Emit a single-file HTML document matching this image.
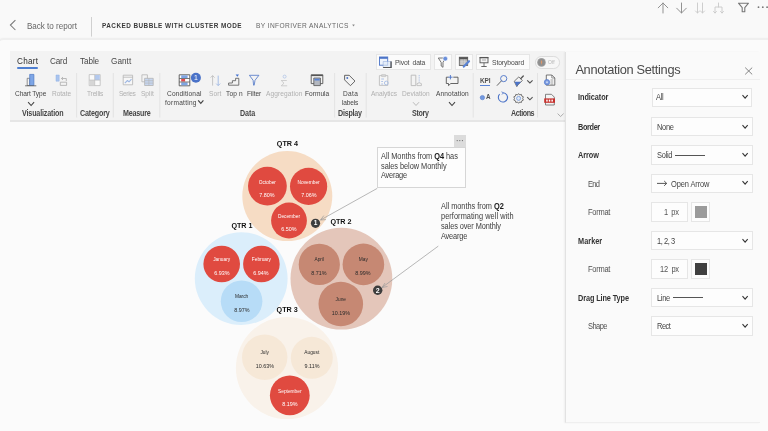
<!DOCTYPE html><html><head><meta charset="utf-8"><style>html,body{margin:0;padding:0;width:768px;height:431px;overflow:hidden;font-family:"Liberation Sans", sans-serif;-webkit-font-smoothing:antialiased}</style></head><body><div style="position:relative;width:768px;height:431px;overflow:hidden;will-change:transform"><div style="position:absolute;left:0;top:0;width:768px;height:431px;background:#f9f9f9"></div><div style="position:absolute;left:-2px;top:38.6px;width:790px;height:420px;background:#fbfbfb;border:1px solid #efefef;border-radius:5px;box-shadow:0 -0.5px 1.5px rgba(0,0,0,0.05)"></div><svg style="position:absolute;left:0;top:0" width="768" height="45"><polyline points="15.4,20.2 10.4,25.1 15.4,30" fill="none" stroke="#777" stroke-width="1.05"/><line x1="91.5" y1="17" x2="91.5" y2="36.6" stroke="#d0d0d0" stroke-width="1"/></svg><svg style="position:absolute;left:351px;top:23px" width="5" height="5"><polygon points="1.2,1.6 3.8,1.6 2.5,3.4" fill="#888"/></svg><svg style="position:absolute;left:650px;top:0" width="118" height="18" fill="none" stroke-linecap="round" stroke-linejoin="round">
<g stroke="#8c8c8c" stroke-width="0.95"><line x1="13" y1="3" x2="13" y2="13"/><polyline points="8.2,7.8 13,3 17.8,7.8"/></g>
<g stroke="#8c8c8c" stroke-width="0.95"><line x1="31.5" y1="3" x2="31.5" y2="13"/><polyline points="26.7,8.2 31.5,13 36.3,8.2"/></g>
<g stroke="#c8c8c8" stroke-width="0.9"><line x1="47.5" y1="3" x2="47.5" y2="13"/><polyline points="45.5,11 47.5,13 49.5,11"/><line x1="52.5" y1="3" x2="52.5" y2="13"/><polyline points="50.5,11 52.5,13 54.5,11"/></g>
<g stroke="#c8c8c8" stroke-width="0.9"><line x1="68.5" y1="3" x2="68.5" y2="7"/><polyline points="65,13 65,7 72,7 72,13"/><polyline points="63.5,11.5 65,13 66.5,11.5"/><polyline points="70.5,11.5 72,13 73.5,11.5"/></g>
<g stroke="#777" stroke-width="1.1"><polygon points="88.5,3.2 98.5,3.2 94.8,7.6 94.8,11.8 92.2,11.8 92.2,7.6"/></g>
<g fill="#777" stroke="none"><circle cx="108.5" cy="7.2" r="0.9"/><circle cx="112.8" cy="7.2" r="0.9"/><circle cx="117.1" cy="7.2" r="0.9"/></g>
</svg><div style="position:absolute;left:10.2px;top:51.1px;width:554.4px;height:68.8px;background:#f3f3f3;border-bottom:2px solid #e6e6e6"></div><div style="position:absolute;left:17px;top:67.2px;width:21px;height:1.6px;background:#4f7fd1;border-radius:1px"></div><svg style="position:absolute;left:0;top:0" width="768" height="125"><line x1="76.6" y1="73" x2="76.6" y2="117.5" stroke="#dedede" stroke-width="0.8"/><line x1="113.3" y1="73" x2="113.3" y2="117.5" stroke="#dedede" stroke-width="0.8"/><line x1="159.8" y1="73" x2="159.8" y2="117.5" stroke="#dedede" stroke-width="0.8"/><line x1="334.6" y1="73" x2="334.6" y2="117.5" stroke="#dedede" stroke-width="0.8"/><line x1="366.2" y1="73" x2="366.2" y2="117.5" stroke="#dedede" stroke-width="0.8"/><line x1="473.2" y1="73" x2="473.2" y2="117.5" stroke="#dedede" stroke-width="0.8"/><line x1="537.5" y1="73" x2="537.5" y2="117.5" stroke="#dedede" stroke-width="0.8"/></svg><svg style="position:absolute;left:0;top:0" width="768" height="125"><polyline points="28.1,102.2 31.1,105.5 34.1,102.2" fill="none" stroke="#444" stroke-width="1.1"/><polyline points="198.20000000000002,100.4 200.8,103.3 203.4,100.4" fill="none" stroke="#444" stroke-width="1.2"/><polyline points="413.0,102.2 416,105.5 419.0,102.2" fill="none" stroke="#bbb" stroke-width="1.0"/><polyline points="449.0,102.2 452,105.5 455.0,102.2" fill="none" stroke="#444" stroke-width="1.1"/><polyline points="527.1999999999999,80.3 529.9,83.0 532.6,80.3" fill="none" stroke="#555" stroke-width="1.1"/><polyline points="527.1999999999999,97.1 529.9,99.8 532.6,97.1" fill="none" stroke="#555" stroke-width="1.1"/><polyline points="557.6,113.60000000000001 560.6,116.5 563.6,113.60000000000001" fill="none" stroke="#999" stroke-width="0.8"/></svg><svg style="position:absolute;left:0;top:0" width="768" height="125" fill="none" stroke-linejoin="round">
<!-- chart type -->
<rect x="27.2" y="78.3" width="2.5" height="7.2" stroke="#666" stroke-width="0.7"/>
<rect x="29.7" y="74.4" width="4.2" height="11.1" fill="#7ea6e6" stroke="#4d78c4" stroke-width="0.7"/>
<line x1="25.1" y1="85.8" x2="36.3" y2="85.8" stroke="#555" stroke-width="0.8"/>
<!-- rotate -->
<rect x="56" y="75" width="3.2" height="6.2" fill="#a9c4ee" stroke="#8fb0e6" stroke-width="0.5"/>
<path d="M61.6,78.5 L66.3,78.5 L66.3,81" stroke="#aaa" stroke-width="0.8"/><polyline points="63,77 61.4,78.5 63,80" stroke="#aaa" stroke-width="0.8"/>
<rect x="60.3" y="82.2" width="6.3" height="3.2" stroke="#aaa" stroke-width="0.8"/>
<!-- trellis -->
<rect x="89.2" y="74.6" width="11" height="11" fill="#fafafa" stroke="#bdbdbd" stroke-width="0.8"/>
<rect x="94.7" y="75" width="5.1" height="5.1" fill="#b3c9ee"/>
<rect x="89.6" y="80.1" width="5.1" height="5.1" fill="#d6d6d6"/>
<line x1="94.7" y1="74.6" x2="94.7" y2="85.6" stroke="#bdbdbd" stroke-width="0.7"/><line x1="89.2" y1="80.1" x2="100.2" y2="80.1" stroke="#bdbdbd" stroke-width="0.7"/>
<!-- series -->
<rect x="123.2" y="75.2" width="9.4" height="9.6" fill="#f7f7f7" stroke="#b4b4b4" stroke-width="0.8"/>
<line x1="123.2" y1="77.2" x2="132.6" y2="77.2" stroke="#b4b4b4" stroke-width="0.8"/>
<path d="M124.8,83.2 L127.5,80.5 L129,81.8 L131.5,79.2" stroke="#9fb8e3" stroke-width="1.1"/>
<!-- split -->
<rect x="141.9" y="74.8" width="5.5" height="7" stroke="#b4b4b4" stroke-width="0.8"/>
<rect x="144.6" y="78.3" width="8.6" height="7.2" fill="#c6d6f0" stroke="#b4b4b4" stroke-width="0.8"/>
<line x1="144.6" y1="80.7" x2="153.2" y2="80.7" stroke="#b4b4b4" stroke-width="0.6"/><line x1="144.6" y1="83.1" x2="153.2" y2="83.1" stroke="#b4b4b4" stroke-width="0.6"/><line x1="148.9" y1="78.3" x2="148.9" y2="85.5" stroke="#b4b4b4" stroke-width="0.6"/>
<!-- conditional formatting -->
<rect x="179.2" y="74.8" width="10.6" height="11" fill="#fff" stroke="#555" stroke-width="0.9"/>
<rect x="181.2" y="75.3" width="6.4" height="2.8" fill="#7fa5e3"/>
<rect x="181.2" y="82.4" width="6.4" height="2.9" fill="#7fa5e3"/>
<rect x="181.2" y="79" width="3.9" height="2.5" fill="#e5484d"/>
<line x1="179.2" y1="78.5" x2="189.8" y2="78.5" stroke="#555" stroke-width="0.8"/>
<line x1="179.2" y1="82" x2="189.8" y2="82" stroke="#555" stroke-width="0.8"/>
<circle cx="195.9" cy="77.7" r="5" fill="#4a72c8"/>
<!-- sort -->
<g stroke="#c0c0c0" stroke-width="0.9"><line x1="212.6" y1="75.6" x2="212.6" y2="85.6"/><polyline points="210.6,77.6 212.6,75.6 214.6,77.6"/></g>
<g stroke="#9fb8e3" stroke-width="0.9"><line x1="218.2" y1="75.6" x2="218.2" y2="85.6"/><polyline points="216.2,83.6 218.2,85.6 220.2,83.6"/></g>
<!-- top n -->
<path d="M228.6,85.2 L238.8,85.2 L238.8,78.3 L235.6,78.3 L235.6,80.7 L232.4,80.7 L232.4,83 L228.6,83 Z" stroke="#555" stroke-width="0.8"/>
<polygon points="235.6,74.6 239,74.6 237.3,76.7" fill="#3f6fd0"/>
<!-- filter -->
<polygon points="249.4,75.3 258.9,75.3 255,80.3 254.2,85.2 253.6,85.2 253.1,80.3" stroke="#4b73c7" stroke-width="0.8"/>
<!-- aggregation -->
<path d="M286.8,80.5 L281.2,80.5 L284,83.2 L281.2,85.8 L287.2,85.8" stroke="#c4c4c4" stroke-width="0.8"/>
<circle cx="284.6" cy="76.6" r="1.5" stroke="#a9c0e6" stroke-width="0.7"/>
<!-- formula -->
<rect x="311.2" y="74.8" width="11.6" height="8.8" fill="#f3f3f3" stroke="#555" stroke-width="0.9"/>
<rect x="311.2" y="74.8" width="11.6" height="1.3" fill="#555"/>
<rect x="313.8" y="78" width="6.6" height="7.6" fill="#b4b8c0" stroke="#555" stroke-width="0.8"/>
<rect x="314.5" y="78.7" width="5.2" height="1.8" fill="#5a84d6"/>
<!-- data labels (tag) -->
<path d="M344.6,75.3 L349.2,75.3 L355,81.1 L350.4,85.7 L344.6,79.9 Z" stroke="#555" stroke-width="0.9"/>
<circle cx="347.3" cy="78" r="0.95" fill="#4b73c7"/>
<!-- analytics -->
<rect x="379.4" y="75.6" width="8.4" height="9.8" fill="#f6f6f6" stroke="#b8b8b8" stroke-width="0.8"/>
<rect x="381.6" y="74.6" width="4" height="2" fill="#d8d8d8" stroke="#b8b8b8" stroke-width="0.5"/>
<line x1="381.2" y1="79" x2="384" y2="79" stroke="#9fb8e3" stroke-width="0.8"/><line x1="381.2" y1="81.5" x2="383" y2="81.5" stroke="#9fb8e3" stroke-width="0.8"/><line x1="381.2" y1="84" x2="383" y2="84" stroke="#9fb8e3" stroke-width="0.8"/>
<circle cx="386.3" cy="83" r="1.9" stroke="#9fb8e3" stroke-width="0.8"/>
<!-- deviation -->
<rect x="411.2" y="75.2" width="4.6" height="10.4" stroke="#b8b8b8" stroke-width="0.9"/>
<line x1="419.2" y1="75" x2="419.2" y2="82.5" stroke="#9fb8e3" stroke-width="0.8" stroke-dasharray="1.3,0.9"/>
<path d="M417,85.6 L417,83.6 Q419.2,82 421.4,83.6 L421.4,85.6 Z" stroke="#b8b8b8" stroke-width="0.8"/>
<!-- annotation -->
<path d="M448.5,77.2 L446.3,77.2 L446.3,83.5 L448.5,83.5 L448.5,85.6 L450.8,83.5 L458,83.5 L458,77.2 L453.3,77.2" stroke="#555" stroke-width="0.9"/>
<g stroke="#4b73c7" stroke-width="0.9"><line x1="450.4" y1="75" x2="450.4" y2="79.4"/><line x1="448.2" y1="77.2" x2="452.6" y2="77.2"/></g>
<!-- search -->
<circle cx="503.7" cy="78.6" r="3.1" stroke="#4b73c7" stroke-width="0.9"/>
<line x1="501.4" y1="80.9" x2="497.2" y2="85.4" stroke="#555" stroke-width="0.9" stroke-linecap="round"/>
<!-- brush -->
<path d="M514.2,81.3 L518.8,76.9 L522.4,80.5 L517.8,85 L516.8,86.6 Z" fill="#f3f3f3" stroke="#555" stroke-width="0.8"/>
<path d="M514.6,81.8 L521.2,81.7 L517.8,85 L516.8,86.4 Z" fill="#4b73c7"/>
<line x1="520.8" y1="78.5" x2="523.3" y2="76" stroke="#555" stroke-width="1.3" stroke-linecap="round"/>
<!-- refresh -->
<path d="M499.6,94.2 A4.6,4.6 0 1 0 503.2,92.8" stroke="#4b73c7" stroke-width="1.1"/>
<polyline points="501.5,91.8 503.4,92.8 502,94.5" stroke="#4b73c7" stroke-width="0.8"/>
<!-- gear -->
<circle cx="518.6" cy="98.4" r="2" fill="#dfe8f7" stroke="#6f95dc" stroke-width="0.8"/>
<path d="M518.6,93.6 L519.7,94.9 L521.4,94.4 L521.8,96.1 L523.4,96.8 L522.7,98.4 L523.4,100.1 L521.8,100.8 L521.4,102.5 L519.7,102 L518.6,103.3 L517.5,102 L515.8,102.5 L515.4,100.8 L513.8,100.1 L514.5,98.4 L513.8,96.8 L515.4,96.1 L515.8,94.4 L517.5,94.9 Z" stroke="#555" stroke-width="0.8"/>
<!-- doc -->
<path d="M546.3,75 L551.8,75 L554.8,78 L554.8,85.2 L546.3,85.2 Z" fill="#fafafa" stroke="#555" stroke-width="0.8"/>
<path d="M551.8,75 L551.8,78 L554.8,78" stroke="#555" stroke-width="0.6"/>
<line x1="550.5" y1="80" x2="553.3" y2="80" stroke="#666" stroke-width="0.6"/><line x1="550.5" y1="82" x2="553.3" y2="82" stroke="#666" stroke-width="0.6"/><line x1="550.5" y1="84" x2="553.3" y2="84" stroke="#666" stroke-width="0.6"/>
<circle cx="547" cy="82.2" r="2.7" fill="#7b9be0" stroke="#4b73c7" stroke-width="0.6"/>
<circle cx="547" cy="82.2" r="1" fill="#c9d7f3"/>
<!-- pdf -->
<path d="M545.5,94.3 L551.5,94.3 L554.3,97.1 L554.3,105 L545.5,105 Z" fill="#f4f4f4" stroke="#666" stroke-width="0.8"/>
<rect x="544.2" y="98.4" width="10.8" height="4.4" fill="#c62f2b"/>
<g fill="#fff"><rect x="546.2" y="99.6" width="1.5" height="2"/><rect x="548.8" y="99.6" width="1.5" height="2"/><rect x="551.4" y="99.6" width="1.5" height="2"/></g>
</svg><div style="position:absolute;left:479.8px;top:85px;width:10.5px;height:0.9px;background:#5a84d6"></div><svg style="position:absolute;left:0;top:0" width="768" height="125"><circle cx="482.4" cy="97.6" r="2.2" fill="#7299df" stroke="#4b73c7" stroke-width="0.5"/></svg><div style="position:absolute;left:375.6px;top:53.8px;width:55.599999999999966px;height:16.700000000000003px;background:#fbfbfb;border:0.8px solid #e6e6e6;box-sizing:border-box"></div><div style="position:absolute;left:433.6px;top:53.8px;width:18.799999999999955px;height:16.700000000000003px;background:#fbfbfb;border:0.8px solid #e6e6e6;box-sizing:border-box"></div><div style="position:absolute;left:454.9px;top:53.8px;width:18.400000000000034px;height:16.700000000000003px;background:#fbfbfb;border:0.8px solid #e6e6e6;box-sizing:border-box"></div><div style="position:absolute;left:476.2px;top:53.8px;width:54.19999999999999px;height:16.700000000000003px;background:#fbfbfb;border:0.8px solid #e6e6e6;box-sizing:border-box"></div><div style="position:absolute;left:535.4px;top:56.2px;width:24.2px;height:12.4px;border:0.8px solid #dcdcdc;border-radius:6.2px;box-sizing:border-box;background:#f7f7f7"></div><svg style="position:absolute;left:0;top:0" width="768" height="125" fill="none">
<circle cx="541.5" cy="62.4" r="4.3" fill="#a0a0a0"/><circle cx="541.5" cy="62.4" r="3.4" fill="#8f8f8f"/><path d="M541.5,59.8 Q543.2,62.5 541.5,65 Q539.8,62.5 541.5,59.8 Z" fill="#e0986a"/>
<!-- pivot icon -->
<rect x="379.5" y="57" width="8.2" height="8.2" fill="#eef3fb" stroke="#4b73c7" stroke-width="0.9"/>
<rect x="379.5" y="57" width="8.2" height="1.8" fill="#4b73c7"/>
<path d="M383.2,67.5 L391,67.5 L391,61.5" stroke="#555" stroke-width="1.1"/>
<path d="M383.2,61.5 L391,61.5 L391,67.5 L383.2,67.5 Z" fill="#dfe9f7" fill-opacity="0.7" stroke="#8aa5d8" stroke-width="0.5"/>
<path d="M383.2,67.5 L391,67.5 L391,61.5" stroke="#555" stroke-width="1.1"/>
<!-- filter btn icon -->
<polygon points="438.3,58 445.5,58 443,62.5 443,67.3 441.2,66 441.2,62.5" fill="#f6f6f6" stroke="#666" stroke-width="0.9"/>
<circle cx="445.3" cy="58.7" r="2.4" fill="#6a8fdb" stroke="#fff" stroke-width="0.6"/>
<!-- table edit icon -->
<rect x="459.3" y="57.2" width="8.4" height="8.2" fill="#b5b5b5" stroke="#555" stroke-width="0.8"/>
<rect x="459.3" y="57.2" width="8.4" height="2" fill="#555"/>
<g stroke="#e9e9e9" stroke-width="0.5"><line x1="459.7" y1="61.9" x2="467.3" y2="61.9"/><line x1="459.7" y1="63.9" x2="467.3" y2="63.9"/><line x1="462" y1="59.3" x2="462" y2="65.2"/><line x1="464.8" y1="59.3" x2="464.8" y2="65.2"/></g>
<line x1="463.8" y1="66.6" x2="469" y2="61.2" stroke="#5a84d6" stroke-width="2.2" stroke-linecap="round"/>
<!-- storyboard icon -->
<rect x="480" y="57.6" width="8" height="5.2" fill="#f3f3f3" stroke="#555" stroke-width="0.9"/>
<line x1="479.6" y1="57.6" x2="488.4" y2="57.6" stroke="#555" stroke-width="1.3"/>
<line x1="482" y1="60" x2="486" y2="60" stroke="#888" stroke-width="0.7"/>
<line x1="484" y1="62.8" x2="484" y2="66.3" stroke="#555" stroke-width="0.8"/><line x1="481.3" y1="66.5" x2="486.7" y2="66.5" stroke="#555" stroke-width="0.9"/>
</svg><div style="position:absolute;left:565px;top:52px;width:195px;height:370.6px;background:#fafafa;border-left:1px solid #e2e2e2;border-bottom:1px solid #efefef;box-sizing:border-box;box-shadow:-1px 0 1.5px rgba(0,0,0,0.05)"></div><div style="position:absolute;left:566px;top:79.2px;width:194px;height:0.8px;background:#efefef"></div><svg style="position:absolute;left:740px;top:62px" width="18" height="18"><g stroke="#777" stroke-width="0.9"><line x1="5.2" y1="5.6" x2="12.2" y2="12.4"/><line x1="12.2" y1="5.6" x2="5.2" y2="12.4"/></g></svg><div style="position:absolute;left:652.3px;top:87.5px;width:99.5px;height:19.4px;background:#fdfdfd;border:0.8px solid #e6e6e6;box-sizing:border-box"></div><svg style="position:absolute;left:738px;top:91.1px" width="14" height="12"><polyline points="4.5,4.199999999999999 7.1,7.1000000000000005 9.7,4.199999999999999" fill="none" stroke="#333" stroke-width="1.1"/></svg><div style="position:absolute;left:651px;top:117.0px;width:101.8px;height:19.4px;background:#fdfdfd;border:0.8px solid #e6e6e6;box-sizing:border-box"></div><svg style="position:absolute;left:738px;top:120.6px" width="14" height="12"><polyline points="4.5,4.199999999999999 7.1,7.1000000000000005 9.7,4.199999999999999" fill="none" stroke="#333" stroke-width="1.1"/></svg><div style="position:absolute;left:651px;top:145.4px;width:101.8px;height:19.4px;background:#fdfdfd;border:0.8px solid #e6e6e6;box-sizing:border-box"></div><svg style="position:absolute;left:738px;top:149px" width="14" height="12"><polyline points="4.5,4.199999999999999 7.1,7.1000000000000005 9.7,4.199999999999999" fill="none" stroke="#333" stroke-width="1.1"/></svg><div style="position:absolute;left:651px;top:173.70000000000002px;width:101.8px;height:19.4px;background:#fdfdfd;border:0.8px solid #e6e6e6;box-sizing:border-box"></div><svg style="position:absolute;left:738px;top:177.3px" width="14" height="12"><polyline points="4.5,4.199999999999999 7.1,7.1000000000000005 9.7,4.199999999999999" fill="none" stroke="#333" stroke-width="1.1"/></svg><div style="position:absolute;left:651.3px;top:202.4px;width:36.5px;height:19.2px;background:#fdfdfd;border:0.8px solid #e6e6e6;box-sizing:border-box"></div><div style="position:absolute;left:691px;top:202.4px;width:19.4px;height:19.2px;background:#fdfdfd;border:0.8px solid #e6e6e6;box-sizing:border-box"></div><div style="position:absolute;left:651px;top:231.1px;width:101.8px;height:19.4px;background:#fdfdfd;border:0.8px solid #e6e6e6;box-sizing:border-box"></div><svg style="position:absolute;left:738px;top:234.7px" width="14" height="12"><polyline points="4.5,4.199999999999999 7.1,7.1000000000000005 9.7,4.199999999999999" fill="none" stroke="#333" stroke-width="1.1"/></svg><div style="position:absolute;left:651.3px;top:259.4px;width:36.5px;height:19.2px;background:#fdfdfd;border:0.8px solid #e6e6e6;box-sizing:border-box"></div><div style="position:absolute;left:691px;top:259.4px;width:19.4px;height:19.2px;background:#fdfdfd;border:0.8px solid #e6e6e6;box-sizing:border-box"></div><div style="position:absolute;left:651px;top:287.9px;width:101.8px;height:19.4px;background:#fdfdfd;border:0.8px solid #e6e6e6;box-sizing:border-box"></div><svg style="position:absolute;left:738px;top:291.5px" width="14" height="12"><polyline points="4.5,4.199999999999999 7.1,7.1000000000000005 9.7,4.199999999999999" fill="none" stroke="#333" stroke-width="1.1"/></svg><div style="position:absolute;left:651px;top:316.4px;width:101.8px;height:19.4px;background:#fdfdfd;border:0.8px solid #e6e6e6;box-sizing:border-box"></div><svg style="position:absolute;left:738px;top:320px" width="14" height="12"><polyline points="4.5,4.199999999999999 7.1,7.1000000000000005 9.7,4.199999999999999" fill="none" stroke="#333" stroke-width="1.1"/></svg><div style="position:absolute;left:675.3px;top:154.6px;width:30.2px;height:1.1px;background:#555"></div><svg style="position:absolute;left:655px;top:178px" width="14" height="10"><g fill="none" stroke="#444" stroke-width="0.9"><line x1="2" y1="5.4" x2="11.6" y2="5.4"/><polyline points="9.2,3 11.7,5.4 9.2,7.8"/></g></svg><div style="position:absolute;left:694.8px;top:205.8px;width:12px;height:12.4px;background:#9b9b9b"></div><div style="position:absolute;left:694.7px;top:263px;width:12.6px;height:12.2px;background:#404040"></div><div style="position:absolute;left:672.5px;top:297.1px;width:30.5px;height:1.1px;background:#555"></div><svg style="position:absolute;left:0;top:0" width="768" height="431"><circle cx="287.3" cy="196.1" r="45" fill="#f6dcc4"/><circle cx="241.2" cy="278.6" r="46.4" fill="#dbeefb"/><circle cx="341.4" cy="278.7" r="50.9" fill="#e4c6ba"/><circle cx="287" cy="368" r="51.1" fill="#f9f2ea"/><circle cx="267.4" cy="186.1" r="19.4" fill="#e04a40"/><circle cx="308.6" cy="186.4" r="18.6" fill="#e04a40"/><circle cx="289" cy="220.5" r="17.9" fill="#e04a40"/><circle cx="221.7" cy="264" r="18.3" fill="#e04a40"/><circle cx="261.4" cy="264" r="18.3" fill="#e04a40"/><circle cx="241.6" cy="301.2" r="20.8" fill="#b7dcf7"/><circle cx="319.3" cy="264.4" r="20.6" fill="#c68873"/><circle cx="363.4" cy="264.4" r="20.8" fill="#c68873"/><circle cx="340.8" cy="304" r="22.3" fill="#c68873"/><circle cx="264.7" cy="357.2" r="22.7" fill="#f6e8d7"/><circle cx="311.8" cy="357.8" r="21" fill="#f6e8d7"/><circle cx="289.8" cy="395.4" r="19.9" fill="#e04a40"/><line x1="377.2" y1="188.4" x2="320.5" y2="220" stroke="#9a9a9a" stroke-width="0.7"/><polyline points="323.8,215.6 320.5,220 326,219.6" fill="none" stroke="#9a9a9a" stroke-width="0.7"/><line x1="438.3" y1="246.1" x2="382" y2="287.5" stroke="#9a9a9a" stroke-width="0.7"/><polyline points="385,283 382,287.5 387.5,286.5" fill="none" stroke="#9a9a9a" stroke-width="0.7"/><circle cx="315.5" cy="223.3" r="4.6" fill="#3d3d3d"/><circle cx="377.7" cy="290.3" r="4.7" fill="#3d3d3d"/></svg><div style="position:absolute;left:377.2px;top:147.4px;width:88.6px;height:41px;background:#fdfdfd;border:0.8px solid #d6d6d6;box-sizing:border-box"></div><div style="position:absolute;left:454px;top:135px;width:11.5px;height:11.6px;background:#dcdcdc"></div><svg style="position:absolute;left:454px;top:135px" width="12" height="12"><g fill="#666"><circle cx="3.2" cy="5.6" r="0.6"/><circle cx="5.8" cy="5.6" r="0.6"/><circle cx="8.4" cy="5.6" r="0.6"/></g></svg><div id="t0" style="position:absolute;left:26.6px;transform:scaleX(0.9);transform-origin:0 0;top:22.18px;font-size:9.0px;line-height:9.0px;font-weight:400;color:#666;letter-spacing:-0.037px;white-space:nowrap;">Back to report</div><div id="t1" style="position:absolute;left:102px;transform:scaleX(0.84);transform-origin:0 0;top:21.77px;font-size:7.6px;line-height:7.6px;font-weight:700;color:#3a3a3a;letter-spacing:0.552px;white-space:nowrap;">PACKED BUBBLE WITH CLUSTER MODE</div><div id="t2" style="position:absolute;left:255.7px;transform:scaleX(0.87);transform-origin:0 0;top:21.77px;font-size:7.6px;line-height:7.6px;font-weight:400;color:#666;letter-spacing:0.443px;white-space:nowrap;">BY INFORIVER ANALYTICS</div><div id="t3" style="position:absolute;left:17px;transform:scaleX(0.93);transform-origin:0 0;top:56.85px;font-size:8.8px;line-height:8.8px;font-weight:400;color:#2a2a2a;letter-spacing:0.266px;white-space:nowrap;">Chart</div><div id="t4" style="position:absolute;left:49.8px;transform:scaleX(0.93);transform-origin:0 0;top:56.85px;font-size:8.8px;line-height:8.8px;font-weight:400;color:#484848;letter-spacing:-0.195px;white-space:nowrap;">Card</div><div id="t5" style="position:absolute;left:79.6px;transform:scaleX(0.93);transform-origin:0 0;top:56.85px;font-size:8.8px;line-height:8.8px;font-weight:400;color:#484848;letter-spacing:-0.110px;white-space:nowrap;">Table</div><div id="t6" style="position:absolute;left:110.8px;transform:scaleX(0.93);transform-origin:0 0;top:56.85px;font-size:8.8px;line-height:8.8px;font-weight:400;color:#484848;letter-spacing:0.051px;white-space:nowrap;">Gantt</div><div id="t7" style="position:absolute;left:22.3px;transform:scaleX(0.86);transform-origin:0 0;top:109.27px;font-size:8.3px;line-height:8.3px;font-weight:700;color:#474747;letter-spacing:-0.174px;white-space:nowrap;">Visualization</div><div id="t8" style="position:absolute;left:80px;transform:scaleX(0.86);transform-origin:0 0;top:109.27px;font-size:8.3px;line-height:8.3px;font-weight:700;color:#474747;letter-spacing:-0.188px;white-space:nowrap;">Category</div><div id="t9" style="position:absolute;left:123px;transform:scaleX(0.86);transform-origin:0 0;top:109.27px;font-size:8.3px;line-height:8.3px;font-weight:700;color:#474747;letter-spacing:-0.224px;white-space:nowrap;">Measure</div><div id="t10" style="position:absolute;left:239.5px;transform:scaleX(0.86);transform-origin:0 0;top:109.27px;font-size:8.3px;line-height:8.3px;font-weight:700;color:#474747;letter-spacing:-0.103px;white-space:nowrap;">Data</div><div id="t11" style="position:absolute;left:338px;transform:scaleX(0.86);transform-origin:0 0;top:109.27px;font-size:8.3px;line-height:8.3px;font-weight:700;color:#474747;letter-spacing:-0.268px;white-space:nowrap;">Display</div><div id="t12" style="position:absolute;left:411.8px;transform:scaleX(0.86);transform-origin:0 0;top:109.27px;font-size:8.3px;line-height:8.3px;font-weight:700;color:#474747;letter-spacing:-0.363px;white-space:nowrap;">Story</div><div id="t13" style="position:absolute;left:510.7px;transform:scaleX(0.86);transform-origin:0 0;top:109.27px;font-size:8.3px;line-height:8.3px;font-weight:700;color:#474747;letter-spacing:-0.499px;white-space:nowrap;">Actions</div><div id="t14" style="position:absolute;left:15px;transform:scaleX(0.9);transform-origin:0 0;top:90.32px;font-size:7.3px;line-height:7.3px;font-weight:400;color:#454545;letter-spacing:-0.087px;white-space:nowrap;">Chart Type</div><div id="t15" style="position:absolute;left:51.9px;transform:scaleX(0.9);transform-origin:0 0;top:90.32px;font-size:7.3px;line-height:7.3px;font-weight:400;color:#b0b0b0;letter-spacing:-0.056px;white-space:nowrap;">Rotate</div><div id="t16" style="position:absolute;left:86.7px;transform:scaleX(0.9);transform-origin:0 0;top:90.32px;font-size:7.3px;line-height:7.3px;font-weight:400;color:#b0b0b0;letter-spacing:-0.179px;white-space:nowrap;">Trellis</div><div id="t17" style="position:absolute;left:119px;transform:scaleX(0.9);transform-origin:0 0;top:90.32px;font-size:7.3px;line-height:7.3px;font-weight:400;color:#b0b0b0;letter-spacing:-0.404px;white-space:nowrap;">Series</div><div id="t18" style="position:absolute;left:141px;transform:scaleX(0.9);transform-origin:0 0;top:90.32px;font-size:7.3px;line-height:7.3px;font-weight:400;color:#b0b0b0;letter-spacing:-0.009px;white-space:nowrap;">Split</div><div id="t19" style="position:absolute;left:167px;transform:scaleX(0.9);transform-origin:0 0;top:90.32px;font-size:7.3px;line-height:7.3px;font-weight:400;color:#454545;letter-spacing:0.171px;white-space:nowrap;">Conditional</div><div id="t20" style="position:absolute;left:165px;transform:scaleX(0.9);transform-origin:0 0;top:99.12px;font-size:7.3px;line-height:7.3px;font-weight:400;color:#454545;letter-spacing:0.283px;white-space:nowrap;">formatting</div><div id="t21" style="position:absolute;left:208.6px;transform:scaleX(0.9);transform-origin:0 0;top:90.32px;font-size:7.3px;line-height:7.3px;font-weight:400;color:#b0b0b0;letter-spacing:0.129px;white-space:nowrap;">Sort</div><div id="t22" style="position:absolute;left:225.8px;transform:scaleX(0.9);transform-origin:0 0;top:90.32px;font-size:7.3px;line-height:7.3px;font-weight:400;color:#454545;letter-spacing:0.146px;white-space:nowrap;">Top n</div><div id="t23" style="position:absolute;left:246.7px;transform:scaleX(0.9);transform-origin:0 0;top:90.32px;font-size:7.3px;line-height:7.3px;font-weight:400;color:#454545;letter-spacing:-0.066px;white-space:nowrap;">Filter</div><div id="t24" style="position:absolute;left:266px;transform:scaleX(0.9);transform-origin:0 0;top:90.32px;font-size:7.3px;line-height:7.3px;font-weight:400;color:#b0b0b0;letter-spacing:0.120px;white-space:nowrap;">Aggregation</div><div id="t25" style="position:absolute;left:304.8px;transform:scaleX(0.9);transform-origin:0 0;top:90.32px;font-size:7.3px;line-height:7.3px;font-weight:400;color:#454545;letter-spacing:0.021px;white-space:nowrap;">Formula</div><div id="t26" style="position:absolute;left:342.7px;transform:scaleX(0.9);transform-origin:0 0;top:90.32px;font-size:7.3px;line-height:7.3px;font-weight:400;color:#454545;letter-spacing:0.378px;white-space:nowrap;">Data</div><div id="t27" style="position:absolute;left:342px;transform:scaleX(0.9);transform-origin:0 0;top:99.12px;font-size:7.3px;line-height:7.3px;font-weight:400;color:#454545;letter-spacing:-0.171px;white-space:nowrap;">labels</div><div id="t28" style="position:absolute;left:371px;transform:scaleX(0.9);transform-origin:0 0;top:90.32px;font-size:7.3px;line-height:7.3px;font-weight:400;color:#b0b0b0;letter-spacing:-0.039px;white-space:nowrap;">Analytics</div><div id="t29" style="position:absolute;left:402px;transform:scaleX(0.9);transform-origin:0 0;top:90.32px;font-size:7.3px;line-height:7.3px;font-weight:400;color:#b0b0b0;letter-spacing:0.031px;white-space:nowrap;">Deviation</div><div id="t30" style="position:absolute;left:435.5px;transform:scaleX(0.9);transform-origin:0 0;top:90.32px;font-size:7.3px;line-height:7.3px;font-weight:400;color:#454545;letter-spacing:0.159px;white-space:nowrap;">Annotation</div><div id="t31" style="position:absolute;left:135.9px;width:120px;text-align:center;top:74.27px;font-size:7px;line-height:7px;font-weight:400;color:#fff;letter-spacing:0.000px;white-space:nowrap;">1</div><div id="t32" style="position:absolute;left:479.9px;transform:scaleX(0.85);transform-origin:0 0;top:76.77px;font-size:7.6px;line-height:7.6px;font-weight:700;color:#505050;letter-spacing:-0.159px;white-space:nowrap;">KPI</div><div id="t33" style="position:absolute;left:486.1px;top:94.47px;font-size:6.3px;line-height:6.3px;font-weight:700;color:#505050;letter-spacing:0.000px;white-space:nowrap;">A</div><div id="t34" style="position:absolute;left:394.5px;transform:scaleX(0.92);transform-origin:0 0;top:59.04px;font-size:7.4px;line-height:7.4px;font-weight:400;color:#4a4a4a;letter-spacing:-0.199px;white-space:nowrap;">Pivot&nbsp;&nbsp;data</div><div id="t35" style="position:absolute;left:491.8px;transform:scaleX(0.92);transform-origin:0 0;top:59.04px;font-size:7.4px;line-height:7.4px;font-weight:400;color:#4a4a4a;letter-spacing:-0.128px;white-space:nowrap;">Storyboard</div><div id="t36" style="position:absolute;left:548px;top:60.17px;font-size:5px;line-height:5px;font-weight:400;color:#b5b5b5;letter-spacing:0.000px;white-space:nowrap;">Off</div><div id="t37" style="position:absolute;left:575.4px;top:63.56px;font-size:12.8px;line-height:12.8px;font-weight:400;color:#4a4a4a;letter-spacing:-0.322px;white-space:nowrap;">Annotation Settings</div><div id="t38" style="position:absolute;left:578.4px;transform:scaleX(0.86);transform-origin:0 0;top:93.30px;font-size:8.5px;line-height:8.5px;font-weight:700;color:#333;letter-spacing:-0.070px;white-space:nowrap;">Indicator</div><div id="t39" style="position:absolute;left:578.4px;transform:scaleX(0.86);transform-origin:0 0;top:122.80px;font-size:8.5px;line-height:8.5px;font-weight:700;color:#333;letter-spacing:-0.412px;white-space:nowrap;">Border</div><div id="t40" style="position:absolute;left:578.4px;transform:scaleX(0.86);transform-origin:0 0;top:151.20px;font-size:8.5px;line-height:8.5px;font-weight:700;color:#333;letter-spacing:-0.080px;white-space:nowrap;">Arrow</div><div id="t41" style="position:absolute;left:588px;transform:scaleX(0.88);transform-origin:0 0;top:179.50px;font-size:8.5px;line-height:8.5px;font-weight:400;color:#505050;letter-spacing:-0.858px;white-space:nowrap;">End</div><div id="t42" style="position:absolute;left:588px;transform:scaleX(0.88);transform-origin:0 0;top:208.20px;font-size:8.5px;line-height:8.5px;font-weight:400;color:#505050;letter-spacing:-0.293px;white-space:nowrap;">Format</div><div id="t43" style="position:absolute;left:578.4px;transform:scaleX(0.86);transform-origin:0 0;top:236.90px;font-size:8.5px;line-height:8.5px;font-weight:700;color:#333;letter-spacing:0.050px;white-space:nowrap;">Marker</div><div id="t44" style="position:absolute;left:588px;transform:scaleX(0.88);transform-origin:0 0;top:265.20px;font-size:8.5px;line-height:8.5px;font-weight:400;color:#505050;letter-spacing:-0.293px;white-space:nowrap;">Format</div><div id="t45" style="position:absolute;left:578.4px;transform:scaleX(0.86);transform-origin:0 0;top:293.70px;font-size:8.5px;line-height:8.5px;font-weight:700;color:#333;letter-spacing:-0.114px;white-space:nowrap;">Drag Line Type</div><div id="t46" style="position:absolute;left:588px;transform:scaleX(0.88);transform-origin:0 0;top:322.20px;font-size:8.5px;line-height:8.5px;font-weight:400;color:#505050;letter-spacing:-0.609px;white-space:nowrap;">Shape</div><div id="t47" style="position:absolute;left:656px;transform:scaleX(0.9);transform-origin:0 0;top:93.27px;font-size:8.3px;line-height:8.3px;font-weight:400;color:#444;letter-spacing:-0.395px;white-space:nowrap;">All</div><div id="t48" style="position:absolute;left:656.7px;transform:scaleX(0.9);transform-origin:0 0;top:122.87px;font-size:8.3px;line-height:8.3px;font-weight:400;color:#444;letter-spacing:-0.318px;white-space:nowrap;">None</div><div id="t49" style="position:absolute;left:656.5px;transform:scaleX(0.9);transform-origin:0 0;top:151.27px;font-size:8.3px;line-height:8.3px;font-weight:400;color:#444;letter-spacing:-0.308px;white-space:nowrap;">Solid</div><div id="t50" style="position:absolute;left:670.7px;transform:scaleX(0.9);transform-origin:0 0;top:179.57px;font-size:8.3px;line-height:8.3px;font-weight:400;color:#444;letter-spacing:-0.115px;white-space:nowrap;">Open Arrow</div><div id="t51" style="position:absolute;left:663.8px;transform:scaleX(0.9);transform-origin:0 0;top:208.27px;font-size:8.3px;line-height:8.3px;font-weight:400;color:#555;letter-spacing:-0.361px;white-space:nowrap;">1&nbsp;&nbsp;px</div><div id="t52" style="position:absolute;left:657.1px;transform:scaleX(0.9);transform-origin:0 0;top:236.97px;font-size:8.3px;line-height:8.3px;font-weight:400;color:#444;letter-spacing:-0.495px;white-space:nowrap;">1, 2, 3</div><div id="t53" style="position:absolute;left:660px;transform:scaleX(0.9);transform-origin:0 0;top:265.27px;font-size:8.3px;line-height:8.3px;font-weight:400;color:#555;letter-spacing:-0.300px;white-space:nowrap;">12&nbsp;&nbsp;px</div><div id="t54" style="position:absolute;left:656.6px;transform:scaleX(0.9);transform-origin:0 0;top:293.77px;font-size:8.3px;line-height:8.3px;font-weight:400;color:#444;letter-spacing:-0.377px;white-space:nowrap;">Line</div><div id="t55" style="position:absolute;left:656.6px;transform:scaleX(0.9);transform-origin:0 0;top:322.27px;font-size:8.3px;line-height:8.3px;font-weight:400;color:#444;letter-spacing:-0.539px;white-space:nowrap;">Rect</div><div id="t56" style="position:absolute;left:255.5px;width:120px;text-align:center;top:220.31px;font-size:6.6px;line-height:6.6px;font-weight:700;color:#fff;letter-spacing:0.000px;white-space:nowrap;">1</div><div id="t57" style="position:absolute;left:317.7px;width:120px;text-align:center;top:286.97px;font-size:7px;line-height:7px;font-weight:700;color:#fff;letter-spacing:0.000px;white-space:nowrap;">2</div><div id="t58" style="position:absolute;left:276.8px;top:140.21px;font-size:7.2px;line-height:7.2px;font-weight:700;color:#111;letter-spacing:0.000px;white-space:nowrap;">QTR 4</div><div id="t59" style="position:absolute;left:231.4px;top:222.11px;font-size:7.2px;line-height:7.2px;font-weight:700;color:#111;letter-spacing:0.000px;white-space:nowrap;">QTR 1</div><div id="t60" style="position:absolute;left:330.4px;top:218.11px;font-size:7.2px;line-height:7.2px;font-weight:700;color:#111;letter-spacing:0.000px;white-space:nowrap;">QTR 2</div><div id="t61" style="position:absolute;left:276.6px;top:306.11px;font-size:7.2px;line-height:7.2px;font-weight:700;color:#111;letter-spacing:0.000px;white-space:nowrap;">QTR 3</div><div id="t62" style="position:absolute;left:207.39999999999998px;width:120px;text-align:center;top:180.84px;font-size:4.8px;line-height:4.8px;font-weight:400;color:#fff;letter-spacing:0.000px;white-space:nowrap;">October</div><div id="t63" style="position:absolute;left:207.39999999999998px;width:120px;text-align:center;transform:scaleX(0.93);transform-origin:50% 0;top:192.89px;font-size:5.8px;line-height:5.8px;font-weight:400;color:#fff;letter-spacing:0.000px;white-space:nowrap;">7.80%</div><div id="t64" style="position:absolute;left:248.60000000000002px;width:120px;text-align:center;top:180.84px;font-size:4.8px;line-height:4.8px;font-weight:400;color:#fff;letter-spacing:0.000px;white-space:nowrap;">November</div><div id="t65" style="position:absolute;left:248.60000000000002px;width:120px;text-align:center;transform:scaleX(0.93);transform-origin:50% 0;top:192.89px;font-size:5.8px;line-height:5.8px;font-weight:400;color:#fff;letter-spacing:0.000px;white-space:nowrap;">7.06%</div><div id="t66" style="position:absolute;left:229px;width:120px;text-align:center;top:215.14px;font-size:4.8px;line-height:4.8px;font-weight:400;color:#fff;letter-spacing:0.000px;white-space:nowrap;">December</div><div id="t67" style="position:absolute;left:229px;width:120px;text-align:center;transform:scaleX(0.93);transform-origin:50% 0;top:227.09px;font-size:5.8px;line-height:5.8px;font-weight:400;color:#fff;letter-spacing:0.000px;white-space:nowrap;">6.50%</div><div id="t68" style="position:absolute;left:161.7px;width:120px;text-align:center;top:258.44px;font-size:4.8px;line-height:4.8px;font-weight:400;color:#fff;letter-spacing:0.000px;white-space:nowrap;">January</div><div id="t69" style="position:absolute;left:161.7px;width:120px;text-align:center;transform:scaleX(0.93);transform-origin:50% 0;top:271.09px;font-size:5.8px;line-height:5.8px;font-weight:400;color:#fff;letter-spacing:0.000px;white-space:nowrap;">6.93%</div><div id="t70" style="position:absolute;left:201.39999999999998px;width:120px;text-align:center;top:258.44px;font-size:4.8px;line-height:4.8px;font-weight:400;color:#fff;letter-spacing:0.000px;white-space:nowrap;">February</div><div id="t71" style="position:absolute;left:201.39999999999998px;width:120px;text-align:center;transform:scaleX(0.93);transform-origin:50% 0;top:271.09px;font-size:5.8px;line-height:5.8px;font-weight:400;color:#fff;letter-spacing:0.000px;white-space:nowrap;">6.94%</div><div id="t72" style="position:absolute;left:181.6px;width:120px;text-align:center;top:294.94px;font-size:4.8px;line-height:4.8px;font-weight:400;color:#2a2a2a;letter-spacing:0.000px;white-space:nowrap;">March</div><div id="t73" style="position:absolute;left:181.6px;width:120px;text-align:center;transform:scaleX(0.93);transform-origin:50% 0;top:307.59px;font-size:5.8px;line-height:5.8px;font-weight:400;color:#2a2a2a;letter-spacing:0.000px;white-space:nowrap;">8.97%</div><div id="t74" style="position:absolute;left:259.3px;width:120px;text-align:center;top:258.34px;font-size:4.8px;line-height:4.8px;font-weight:400;color:#2a2a2a;letter-spacing:0.000px;white-space:nowrap;">April</div><div id="t75" style="position:absolute;left:259.3px;width:120px;text-align:center;transform:scaleX(0.93);transform-origin:50% 0;top:270.79px;font-size:5.8px;line-height:5.8px;font-weight:400;color:#2a2a2a;letter-spacing:0.000px;white-space:nowrap;">8.71%</div><div id="t76" style="position:absolute;left:303.4px;width:120px;text-align:center;top:258.34px;font-size:4.8px;line-height:4.8px;font-weight:400;color:#2a2a2a;letter-spacing:0.000px;white-space:nowrap;">May</div><div id="t77" style="position:absolute;left:303.4px;width:120px;text-align:center;transform:scaleX(0.93);transform-origin:50% 0;top:270.79px;font-size:5.8px;line-height:5.8px;font-weight:400;color:#2a2a2a;letter-spacing:0.000px;white-space:nowrap;">8.99%</div><div id="t78" style="position:absolute;left:280.8px;width:120px;text-align:center;top:298.34px;font-size:4.8px;line-height:4.8px;font-weight:400;color:#2a2a2a;letter-spacing:0.000px;white-space:nowrap;">June</div><div id="t79" style="position:absolute;left:280.8px;width:120px;text-align:center;transform:scaleX(0.93);transform-origin:50% 0;top:310.79px;font-size:5.8px;line-height:5.8px;font-weight:400;color:#2a2a2a;letter-spacing:0.000px;white-space:nowrap;">10.19%</div><div id="t80" style="position:absolute;left:204.7px;width:120px;text-align:center;top:350.94px;font-size:4.8px;line-height:4.8px;font-weight:400;color:#2a2a2a;letter-spacing:0.000px;white-space:nowrap;">July</div><div id="t81" style="position:absolute;left:204.7px;width:120px;text-align:center;transform:scaleX(0.93);transform-origin:50% 0;top:364.29px;font-size:5.8px;line-height:5.8px;font-weight:400;color:#2a2a2a;letter-spacing:0.000px;white-space:nowrap;">10.63%</div><div id="t82" style="position:absolute;left:251.8px;width:120px;text-align:center;top:350.94px;font-size:4.8px;line-height:4.8px;font-weight:400;color:#2a2a2a;letter-spacing:0.000px;white-space:nowrap;">August</div><div id="t83" style="position:absolute;left:251.8px;width:120px;text-align:center;transform:scaleX(0.93);transform-origin:50% 0;top:364.29px;font-size:5.8px;line-height:5.8px;font-weight:400;color:#2a2a2a;letter-spacing:0.000px;white-space:nowrap;">9.11%</div><div id="t84" style="position:absolute;left:229.8px;width:120px;text-align:center;top:389.64px;font-size:4.8px;line-height:4.8px;font-weight:400;color:#fff;letter-spacing:0.000px;white-space:nowrap;">September</div><div id="t85" style="position:absolute;left:229.8px;width:120px;text-align:center;transform:scaleX(0.93);transform-origin:50% 0;top:402.09px;font-size:5.8px;line-height:5.8px;font-weight:400;color:#fff;letter-spacing:0.000px;white-space:nowrap;">8.19%</div><div id="t86" style="position:absolute;left:381.3px;transform:scaleX(0.9);transform-origin:0 0;top:152.96px;font-size:8.2px;line-height:8.2px;font-weight:400;color:#3c3c3c;letter-spacing:-0.006px;white-space:nowrap;">All Months from <b style="color:#1a1a1a">Q4</b> has</div><div id="t87" style="position:absolute;left:381.3px;transform:scaleX(0.9);transform-origin:0 0;top:162.66px;font-size:8.2px;line-height:8.2px;font-weight:400;color:#3c3c3c;letter-spacing:-0.047px;white-space:nowrap;">sales below Monthly</div><div id="t88" style="position:absolute;left:381.3px;transform:scaleX(0.9);transform-origin:0 0;top:172.36px;font-size:8.2px;line-height:8.2px;font-weight:400;color:#3c3c3c;letter-spacing:-0.227px;white-space:nowrap;">Average</div><div id="t89" style="position:absolute;left:441.2px;transform:scaleX(0.9);transform-origin:0 0;top:203.46px;font-size:8.2px;line-height:8.2px;font-weight:400;color:#3c3c3c;letter-spacing:-0.019px;white-space:nowrap;">All months from <b style="color:#1a1a1a">Q2</b></div><div id="t90" style="position:absolute;left:441.2px;transform:scaleX(0.9);transform-origin:0 0;top:213.16px;font-size:8.2px;line-height:8.2px;font-weight:400;color:#3c3c3c;letter-spacing:0.070px;white-space:nowrap;">performating well with</div><div id="t91" style="position:absolute;left:441.2px;transform:scaleX(0.9);transform-origin:0 0;top:222.86px;font-size:8.2px;line-height:8.2px;font-weight:400;color:#3c3c3c;letter-spacing:-0.101px;white-space:nowrap;">sales over Monthly</div><div id="t92" style="position:absolute;left:441.2px;transform:scaleX(0.9);transform-origin:0 0;top:232.66px;font-size:8.2px;line-height:8.2px;font-weight:400;color:#3c3c3c;letter-spacing:-0.190px;white-space:nowrap;">Avearge</div></div></body></html>
